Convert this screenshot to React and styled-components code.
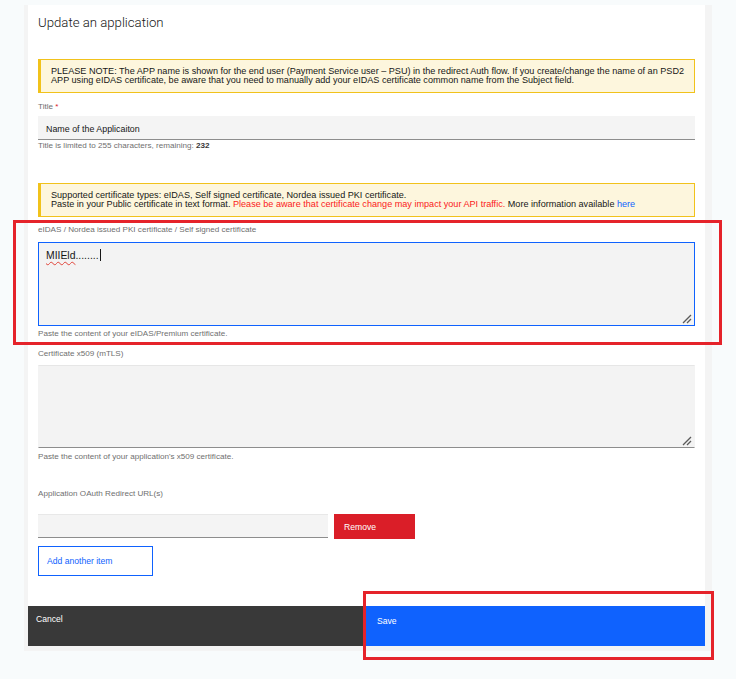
import styled, { createGlobalStyle } from "styled-components";

const GlobalStyle = createGlobalStyle`
  body {
    margin: 0;
    background: #f8fbfc;
    font-family: "Liberation Sans", Arial, sans-serif;
    color: #161616;
  }
`;

const Page = styled.div`
  position: relative;
  min-height: 679px;
  padding: 5px 0 0 24px;
  box-sizing: border-box;
`;

const Panel = styled.div`
  width: 688px;
  box-sizing: border-box;
  padding: 0 7px 5px 4px;
  background: #f4f4f4;
`;

const Modal = styled.div`
  background: #fff;
`;

const Body = styled.div`
  padding: 10px 10px 0 10px;
`;

const Heading = styled.h2`
  margin: 0;
  font-family: Roboto, "Liberation Sans", sans-serif;
  font-weight: 300;
  font-size: 13.2px;
  line-height: 16px;
  color: #161616;
`;

const Notice = styled.div`
  margin-top: ${(p) => p.$mt}px;
  padding: 7px 2px 7px 10px;
  background: #fdf6dd;
  border: 1px solid #f1c21b;
  border-left-width: 3px;
  font-size: 9.1px;
  line-height: 9px;
  color: #161616;
`;

const Danger = styled.span`
  color: #fa1a1a;
`;

const Link = styled.a`
  color: #0f62fe;
  text-decoration: none;
`;

const Label = styled.div`
  margin-top: ${(p) => p.$mt}px;
  font-size: 8.1px;
  line-height: 10px;
  color: #6f6f6f;
`;

const Required = styled.span`
  color: #da1e28;
`;

const Input = styled.div`
  margin-top: ${(p) => p.$mt || 0}px;
  width: ${(p) => p.$width || "auto"};
  height: 24px;
  box-sizing: border-box;
  padding: 2px 8px 0;
  display: flex;
  align-items: center;
  background: #f4f4f4;
  border-top: 1px solid ${(p) => (p.$topLine ? "#e8e8e8" : "#f4f4f4")};
  border-bottom: 1px solid #8d8d8d;
  font-size: 8.9px;
  color: #161616;
`;

const Helper = styled.div`
  margin-top: ${(p) => p.$mt}px;
  font-size: 8.1px;
  line-height: 10px;
  color: #6f6f6f;

  b {
    color: #393939;
  }
`;

const TextBox = styled.div`
  position: relative;
  margin-top: ${(p) => p.$mt}px;
  height: ${(p) => p.$h}px;
  box-sizing: border-box;
  padding: 6px 7px;
  background: #f3f3f3;
  border: 1px solid ${(p) => (p.$focused ? "#0f62fe" : "#f3f3f3")};
  border-top-color: ${(p) => (p.$focused ? "#0f62fe" : "#e6e6e6")};
  border-bottom-color: ${(p) => (p.$focused ? "#0f62fe" : "#8d8d8d")};
  font-size: 10.4px;
  line-height: 12px;
  color: #161616;
`;

const Misspelled = styled.span`
  text-decoration: underline wavy #e0443a;
  text-decoration-thickness: 1px;
  text-underline-offset: 2px;
`;

const Caret = styled.span`
  display: inline-block;
  width: 1px;
  height: 12px;
  margin-left: 1px;
  vertical-align: -2px;
  background: #161616;
`;

const Grip = styled.svg`
  position: absolute;
  right: 2px;
  bottom: 1px;
`;

const UrlRow = styled.div`
  margin-top: 15px;
  display: flex;
  gap: 6px;
`;

const DangerButton = styled.button`
  width: 81px;
  height: 25px;
  border: 0;
  padding: 0 0 0 10px;
  text-align: left;
  background: #da1e28;
  color: #fff;
  font-family: inherit;
  font-size: 8.6px;
`;

const GhostButton = styled.button`
  display: block;
  margin-top: 7px;
  width: 115px;
  height: 30px;
  box-sizing: border-box;
  padding: 0 0 0 8px;
  text-align: left;
  background: #fff;
  border: 1px solid #0f62fe;
  color: #0f62fe;
  font-family: inherit;
  font-size: 8.6px;
`;

const Footer = styled.div`
  margin-top: 30px;
  display: grid;
  grid-template-columns: 337px 1fr;
  height: 40px;
`;

const FooterButton = styled.button`
  display: flex;
  align-items: flex-start;
  height: 40px;
  box-sizing: border-box;
  margin: 0;
  border: 0;
  padding: ${(p) => (p.$primary ? "10px 12px" : "8px 8px")};
  background: ${(p) => (p.$primary ? "#0f62fe" : "#393939")};
  color: #fff;
  font-family: inherit;
  font-size: 8.6px;
  line-height: 10px;
  text-align: left;
`;

const Highlight = styled.div`
  position: absolute;
  box-sizing: border-box;
  border: 3px solid #e5232a;
  pointer-events: none;
`;

function ResizeGrip() {
  return (
    <Grip width="10" height="10" viewBox="0 0 10 10">
      <path d="M1 9 L9 1 M5 9 L9 5" stroke="#5a5a5a" strokeWidth="1.3" />
    </Grip>
  );
}

export default function App() {
  return (
    <>
      <GlobalStyle />
      <Page>
        <Panel>
          <Modal>
            <Body>
              <Heading>Update an application</Heading>

              <Notice $mt={28}>
                PLEASE NOTE: The APP name is shown for the end user (Payment
                Service user – PSU) in the redirect Auth flow. If you
                create/change the name of an PSD2 APP using eIDAS certificate,
                be aware that you need to manually add your eIDAS certificate
                common name from the Subject field.
              </Notice>

              <Label $mt={9}>
                Title <Required>*</Required>
              </Label>
              <Input $mt={4}>Name of the Applicaiton</Input>
              <Helper $mt={1}>
                Title is limited to 255 characters, remaining: <b>232</b>
              </Helper>

              <Notice $mt={32}>
                Supported certificate types: eIDAS, Self signed certificate,
                Nordea issued PKI certificate.
                <br />
                Paste in your Public certificate in text format.{" "}
                <Danger>
                  Please be aware that certificate change may impact your API
                  traffic.
                </Danger>{" "}
                More information available <Link href="#">here</Link>
              </Notice>

              <Label $mt={8}>
                eIDAS / Nordea issued PKI certificate / Self signed certificate
              </Label>
              <TextBox $mt={7} $h={84} $focused>
                <Misspelled>MIIEld</Misspelled>........
                <Caret />
                <ResizeGrip />
              </TextBox>
              <Helper $mt={3}>
                Paste the content of your eIDAS/Premium certificate.
              </Helper>

              <Label $mt={10}>Certificate x509 (mTLS)</Label>
              <TextBox $mt={6} $h={83}>
                <ResizeGrip />
              </TextBox>
              <Helper $mt={4}>
                Paste the content of your application's x509 certificate.
              </Helper>

              <Label $mt={27}>Application OAuth Redirect URL(s)</Label>
              <UrlRow>
                <Input $width="290px" $topLine />
                <DangerButton>Remove</DangerButton>
              </UrlRow>
              <GhostButton>Add another item</GhostButton>
            </Body>

            <Footer>
              <FooterButton>Cancel</FooterButton>
              <FooterButton $primary>Save</FooterButton>
            </Footer>
          </Modal>
        </Panel>

        <Highlight style={{ left: 13, top: 220, width: 709, height: 125 }} />
        <Highlight style={{ left: 363, top: 591, width: 351, height: 69 }} />
      </Page>
    </>
  );
}
